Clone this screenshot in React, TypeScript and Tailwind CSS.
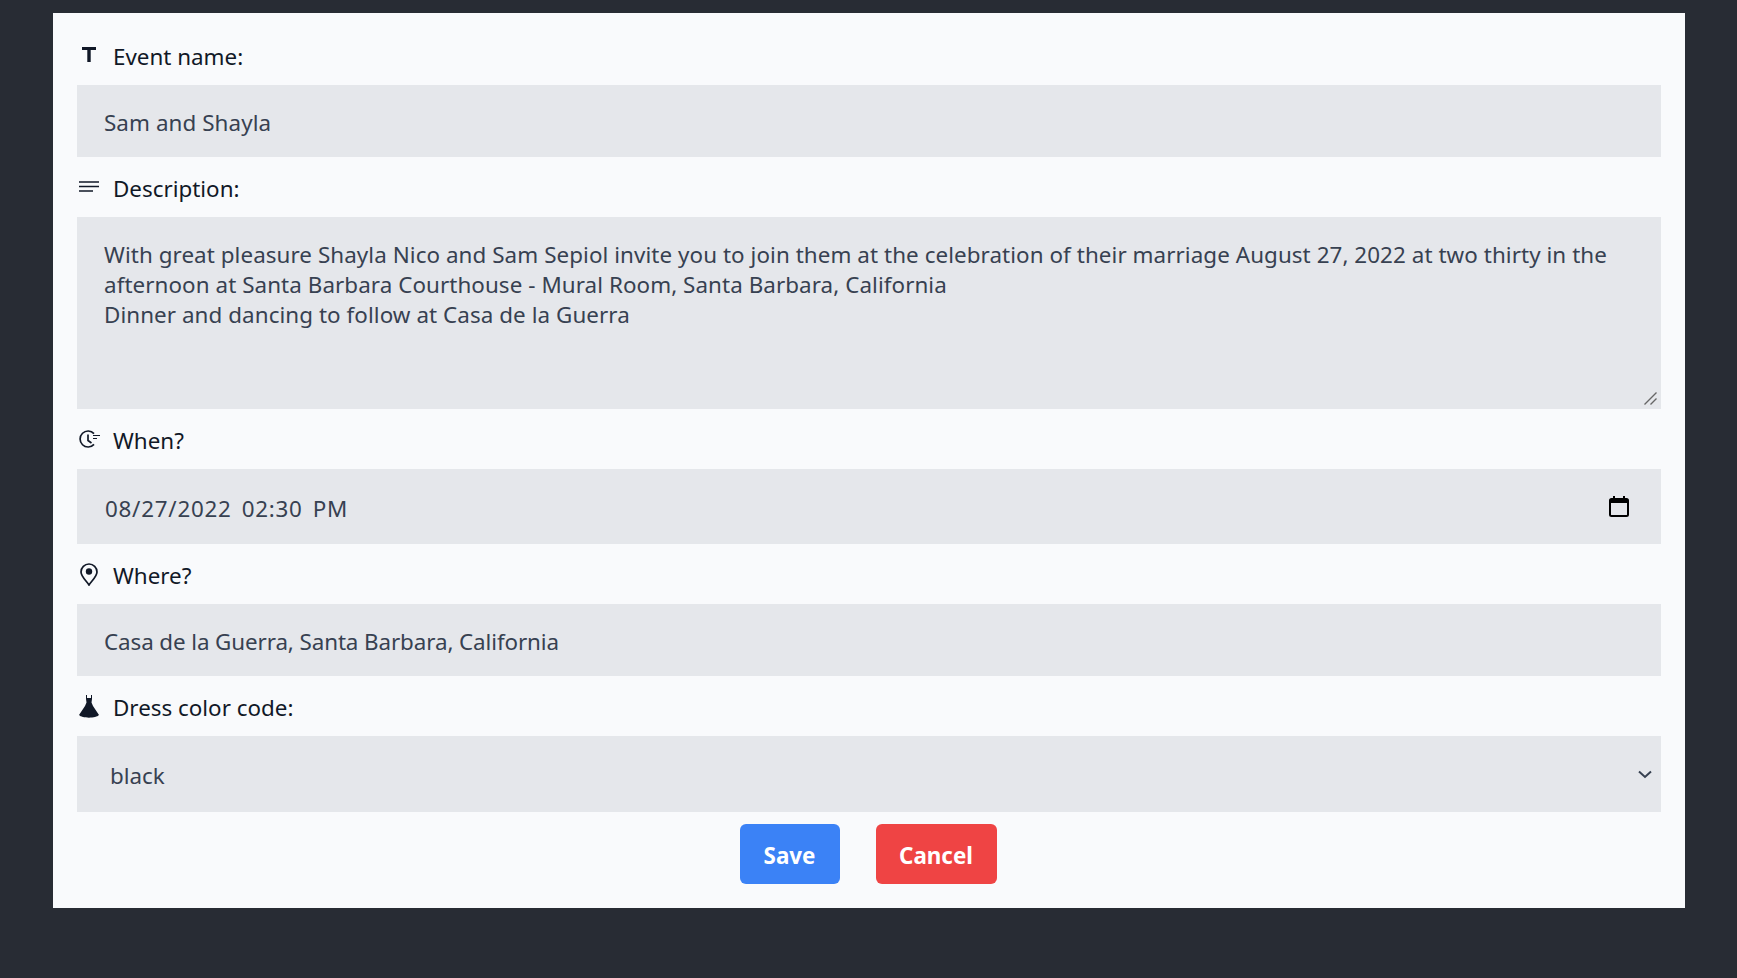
import React from "react";

const font = "font-['Noto_Sans','Open_Sans',sans-serif]";

function TIcon() {
  return (
    <svg width="14" height="15" viewBox="0 0 14 15" className="-mt-[2px] text-[#111827]">
      <path d="M0 0H14V3H8.7V15H5.3V3H0Z" fill="currentColor" />
    </svg>
  );
}
function LinesIcon() {
  return (
    <svg width="20" height="12" viewBox="0 0 20 12" className="text-[#111827]">
      <path d="M0 1H20M0 5.5H20M0 10H14" stroke="currentColor" strokeWidth="1.7" />
    </svg>
  );
}
function ClockIcon() {
  return (
    <svg width="21" height="18" viewBox="0 0 21 18" fill="none" stroke="#111827" strokeWidth="1.7">
      <path d="M15 3.6A8 8 0 1 0 15 14.4" />
      <path d="M9 4.5V10.5L12.5 13" />
      <path d="M14 5.5H21M14 8.5H18" strokeWidth="1.2" />
    </svg>
  );
}
function PinIcon() {
  return (
    <svg width="18" height="23" viewBox="0 0 18 23" fill="none" stroke="#111827" strokeWidth="1.7">
      <path d="M9 22C6.5 18 1 13.5 1 9A8 8 0 0 1 17 9C17 13.5 11.5 18 9 22Z" />
      <circle cx="9" cy="8.5" r="3.2" fill="#111827" stroke="none" />
    </svg>
  );
}
function DressIcon() {
  return (
    <svg width="20" height="23" viewBox="0 0 20 23" fill="#111827">
      <path d="M7 0H8V3H12V0H13V4L12.5 7.5L14 11L20 20C17 23.5 3 23.5 0 20L6 11L7.5 7.5L7 4Z" />
    </svg>
  );
}

function Field({ icon, label, children }: { icon: React.ReactNode; label: string; children: React.ReactNode }) {
  return (
    <div className="flex flex-col">
      <div className="flex h-[60px] items-center text-[22.4px] text-[#111827]">
        <span className="flex w-[36px] shrink-0 justify-center pr-[12px]">{icon}</span>
        <label className="pt-[4px]">{label}</label>
      </div>
      {children}
    </div>
  );
}

const control = "w-full bg-[#e5e7eb] px-[27px] text-[22.4px] text-[#374151] outline-none";

export default function App() {
  return (
    <div className={`min-h-screen bg-[#282c34] pl-[53px] pr-[52px] pt-[13px] ${font}`}>
      <div className="flex flex-col bg-[#f9fafc] px-[24px] pt-[12px] pb-[24px]">
        <Field icon={<TIcon />} label="Event name:">
          <input readOnly value="Sam and Shayla" className={`${control} h-[72px] pt-[2px] tracking-[0.08px]`} />
        </Field>
        <Field icon={<LinesIcon />} label="Description:">
          <div className="relative">
            <textarea
              readOnly
              value={"With great pleasure Shayla Nico and Sam Sepiol invite you to join them at the celebration of their marriage August 27, 2022 at two thirty in the afternoon at Santa Barbara Courthouse - Mural Room, Santa Barbara, California\nDinner and dancing to follow at Casa de la Guerra"}
              className={`${control} block h-[192px] resize-none py-[23px] leading-[30px] tracking-[0.07px]`}
            />
            <svg width="13" height="13" viewBox="0 0 13 13" className="absolute right-[4px] bottom-[4px]" fill="none" stroke="#666" strokeWidth="1.4">
              <path d="M0.5 12.5L12.5 0.5M6.5 12.5L12.5 6.5" />
            </svg>
          </div>
        </Field>
        <Field icon={<ClockIcon />} label="When?">
          <div className={`${control} flex h-[75px] items-center justify-between pr-[32px]`}>
            <span className="pl-[1px] pt-[4px] tracking-[0.75px] [word-spacing:3.5px]">08/27/2022 02:30 PM</span>
            <svg width="20" height="21" viewBox="0 0 20 21" fill="none">
              <path d="M5 0V3M15 0V3" stroke="#000" strokeWidth="2" />
              <rect x="1" y="3" width="18" height="17" rx="1.5" stroke="#000" strokeWidth="2" />
              <rect x="1" y="3" width="18" height="4" fill="#000" />
            </svg>
          </div>
        </Field>
        <Field icon={<PinIcon />} label="Where?">
          <input readOnly value="Casa de la Guerra, Santa Barbara, California" className={`${control} h-[72px] pt-[2px] tracking-[-0.1px]`} />
        </Field>
        <Field icon={<DressIcon />} label="Dress color code:">
          <div className={`${control} flex h-[76px] items-center justify-between pr-[9px] pl-[33px]`}>
            <span className="pt-[3px]">black</span>
            <svg width="14" height="9" viewBox="0 0 14 9" fill="none">
              <path d="M1 1.5L7 7L13 1.5" stroke="#374151" strokeWidth="2" />
            </svg>
          </div>
        </Field>
        <div className="mt-[12px] flex justify-center gap-[36px] pr-[2px]">
          <button className="h-[60px] w-[100px] rounded-[6px] bg-[#3b82f6] pt-[3px] text-[22.4px] font-bold text-white">Save</button>
          <button className="h-[60px] w-[121px] rounded-[6px] bg-[#ef4444] pt-[3px] text-[22.4px] font-bold text-white">Cancel</button>
        </div>
      </div>
    </div>
  );
}
